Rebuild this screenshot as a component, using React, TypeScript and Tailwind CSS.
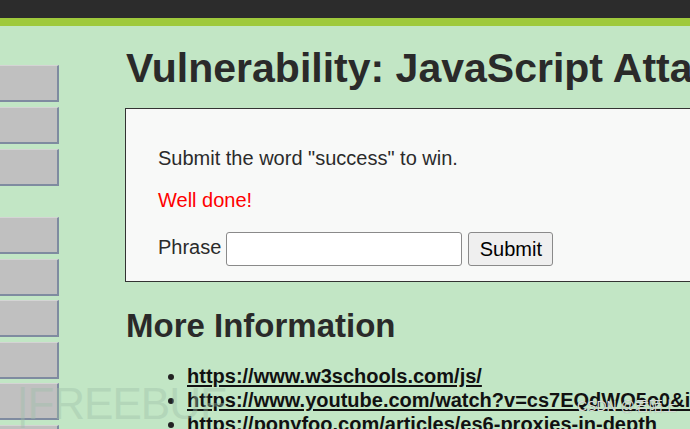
const groupOne = [0, 1, 2];
const groupTwo = [0, 1, 2, 3, 4, 5];

const links = [
  "https://www.w3schools.com/js/",
  "https://www.youtube.com/watch?v=cs7EQdWO5o0&index=17&list=WL",
  "https://ponyfoo.com/articles/es6-proxies-in-depth",
];

function MenuBlock() {
  return (
    <div className="h-[37px] w-[59px] bg-[#c0c0c0] border-t border-t-[#d4d4d4] border-r-2 border-r-[#7f8ba0] border-b-2 border-b-[#7f8ba0]" />
  );
}

export default function App() {
  return (
    <div
      className="relative w-[690px] h-[429px] overflow-hidden bg-[#c2e6c5] text-[#222]"
      style={{ fontFamily: '"Liberation Sans", Arial, sans-serif' }}
    >
      {/* header */}
      <div className="h-[18px] bg-[#2c2c2c]" />
      <div className="h-[8px] bg-[#9fc93c]" />

      <div className="flex">
        {/* side menu */}
        <div className="w-[59px] shrink-0 pt-[39px] flex flex-col">
          <div className="flex flex-col gap-[5px]">
            {groupOne.map((i) => (
              <MenuBlock key={i} />
            ))}
          </div>
          <div className="flex flex-col gap-[4.6px] mt-[31px]">
            {groupTwo.map((i) => (
              <MenuBlock key={i} />
            ))}
          </div>
        </div>

        {/* body */}
        <div className="pl-[66px] shrink-0 w-[800px]">
          <h1 className="mt-[22px] pl-[1px] text-[41px] leading-[41px] font-bold text-[#2a2a2a] whitespace-nowrap">
            Vulnerability: JavaScript Attacks
          </h1>

          <div className="mt-[19px] w-[700px] border border-[#333] bg-[#f8f9f8] pl-[32px] pt-[37px] pb-[15px] text-[20px] leading-[24px]">
            <p className="text-[#2b2b2b]">Submit the word "success" to win.</p>
            <p className="mt-[18px] text-[#ff0000]">Well done!</p>
            <form className="mt-[20px] flex items-center" onSubmit={(e) => e.preventDefault()}>
              <span className="mb-[4px] text-[#2b2b2b]">Phrase</span>
              <input
                className="ml-[5px] w-[236px] h-[34px] bg-white border border-[#8a8a8a] rounded-[3px] px-2 text-[18px]"
                type="text"
              />
              <button
                type="submit"
                className="ml-[6px] w-[85px] h-[34px] bg-[#efefef] border border-[#8a8a8a] rounded-[3px] text-[20px] text-black"
              >
                Submit
              </button>
            </form>
          </div>

          <h2 className="mt-[27px] pl-[1px] text-[33px] leading-[33px] font-bold text-[#2a2a2a]">
            More Information
          </h2>

          <ul className="mt-[22px] pl-[62px] list-disc text-[20px] leading-[24px] font-bold">
            {links.map((l) => (
              <li key={l} className="whitespace-nowrap marker:text-[#222]">
                <a href={l} className="text-[#111] underline decoration-[1.5px] underline-offset-[2px]">
                  {l}
                </a>
              </li>
            ))}
          </ul>
        </div>
      </div>

      {/* watermarks */}
      <div className="absolute left-[17px] top-[382px] text-[44px] leading-[44px] font-normal tracking-[-1px] text-[#9dbfa8] opacity-40 pointer-events-none">
        |FREEBUF
      </div>
      <div
        className="absolute left-[577px] top-[398px] text-[14px] leading-[16px] text-[#d8dcd8] pointer-events-none"
        style={{ fontFamily: '"Liberation Sans", "Noto Sans CJK SC", sans-serif', textShadow: "0 0 1px rgba(0,0,0,0.3)" }}
      >
        CSDN @君陌上
      </div>
    </div>
  );
}
